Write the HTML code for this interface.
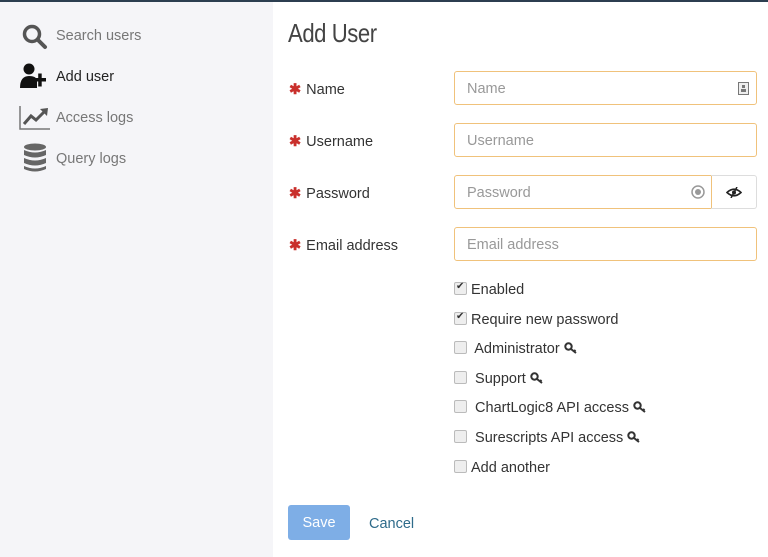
<!DOCTYPE html>
<html><head><style>
body{margin:0;width:768px;height:557px;overflow:hidden;font-family:"Liberation Sans",sans-serif;background:#fff;position:relative}
.top{position:absolute;left:0;top:0;width:768px;height:2px;background:#2c3e50}
.side{position:absolute;left:0;top:2px;width:273px;height:555px;background:#f5f5f8}
.nav{position:absolute;left:56px;font-size:14.5px;color:#777}
.ic{position:absolute}
.t{position:absolute;left:288px;top:18px;font-size:26px;color:#444;letter-spacing:-0.5px;transform:scaleX(0.85);transform-origin:left}
.lab{position:absolute;left:289px;font-size:14.5px;color:#333}
.lab b{color:#c9302c;font-weight:bold;margin-right:5px}
.in{position:absolute;left:454px;width:303px;height:33px;border:1px solid #f0c27b;border-radius:3px;box-sizing:border-box;font-size:14.5px;color:#999;padding:9px 0 0 12px}
.cb{position:absolute;left:454px;font-size:14.5px;color:#333}
.cb i{display:inline-block;width:11px;height:11px;border:1px solid #bbb;border-radius:2px;background:#eee;vertical-align:-1px;margin-right:4px;position:relative}
.cb i.c::after{content:"✔";position:absolute;left:1px;top:-2px;font-size:10px;color:#333;font-style:normal}
.k{display:inline-block;margin-left:4px;vertical-align:-1px}
</style></head><body>
<div class="top"></div>
<div class="side"></div>
<svg class="ic" style="left:21px;top:23px" width="27" height="27" viewBox="0 0 27 27"><circle cx="11" cy="11" r="7.5" fill="none" stroke="#555" stroke-width="3.5"/><line x1="16.5" y1="16.5" x2="24" y2="24" stroke="#555" stroke-width="4" stroke-linecap="round"/></svg>
<div class="nav" style="top:28px">Search users</div>
<svg class="ic" style="left:19px;top:63px" width="32" height="26" viewBox="0 0 32 26"><circle cx="10" cy="6" r="5.5" fill="#111"/><path d="M1 25 Q1 13 10 13 Q17 13 18 17 L18 25 Z" fill="#111"/><rect x="15" y="15" width="12" height="3.5" fill="#111"/><rect x="19.2" y="10.5" width="3.5" height="13" fill="#111"/></svg>
<div class="nav" style="top:69px;color:#222">Add user</div>
<svg class="ic" style="left:19px;top:104px" width="32" height="26" viewBox="0 0 32 26"><path d="M1 2 V25 H31" fill="none" stroke="#777" stroke-width="1.5"/><path d="M5 20 L12 12 L17 16 L25 8" fill="none" stroke="#555" stroke-width="3"/><path d="M21 5 L29 4 L28 12 Z" fill="#555"/></svg>
<div class="nav" style="top:110px">Access logs</div>
<svg class="ic" style="left:23px;top:143px" width="24" height="30" viewBox="0 0 24 30"><ellipse cx="12" cy="4" rx="11" ry="3.5" fill="#666"/><path d="M1 7 Q12 12 23 7 V12 Q12 17 1 12Z" fill="#666"/><path d="M1 15 Q12 20 23 15 V20 Q12 25 1 20Z" fill="#666"/><path d="M1 23 Q12 28 23 23 V26 Q12 31 1 26Z" fill="#666"/></svg>
<div class="nav" style="top:151px">Query logs</div>

<div class="t">Add User</div>
<div class="lab" style="top:82px"><b>✱</b>Name</div>
<div class="lab" style="top:134px"><b>✱</b>Username</div>
<div class="lab" style="top:186px"><b>✱</b>Password</div>
<div class="lab" style="top:238px"><b>✱</b>Email address</div>
<div class="in" style="top:71px;height:34px">Name<svg style="position:absolute;right:7px;top:10px" width="11" height="13"><rect x="0.5" y="0.5" width="10" height="12" fill="#eee" stroke="#777"/><rect x="4" y="3" width="3" height="3" fill="#777"/><rect x="3" y="7" width="5" height="3" fill="#777"/></svg></div>
<div class="in" style="top:123px;height:34px">Username</div>
<div class="in" style="top:175px;height:34px;width:258px;border-radius:3px 0 0 3px">Password<svg style="position:absolute;right:6px;top:9px" width="14" height="15"><circle cx="7" cy="7" r="6" fill="none" stroke="#999" stroke-width="1.5"/><circle cx="7" cy="7" r="3" fill="#999"/></svg></div>
<div style="position:absolute;left:711px;top:175px;width:46px;height:34px;border:1px solid #ddd;border-left:none;box-sizing:border-box;border-radius:0 3px 3px 0"><svg style="position:absolute;left:15px;top:11px" width="16" height="11" viewBox="0 0 16 11"><path d="M1 5.5 Q8 -1 15 5.5 Q8 12 1 5.5Z" fill="none" stroke="#222" stroke-width="1.6"/><circle cx="8" cy="5.5" r="2" fill="#222"/><line x1="11" y1="0" x2="5" y2="11" stroke="#222" stroke-width="1.5"/></svg></div>
<div class="in" style="top:227px;height:34px">Email address</div>

<div class="cb" style="top:282px"><i class="c"></i>Enabled</div>
<div class="cb" style="top:312px"><i class="c"></i>Require new password</div>
<div class="cb" style="top:341px"><i></i> Administrator<svg class="k" width="14" height="12" viewBox="0 0 14 12"><circle cx="4.5" cy="4.5" r="3.2" fill="none" stroke="#333" stroke-width="2"/><path d="M7 7 L12 11 M10 9.5 L11.5 8" stroke="#333" stroke-width="2"/></svg></div>
<div class="cb" style="top:371px"><i></i> Support<svg class="k" width="14" height="12" viewBox="0 0 14 12"><circle cx="4.5" cy="4.5" r="3.2" fill="none" stroke="#333" stroke-width="2"/><path d="M7 7 L12 11 M10 9.5 L11.5 8" stroke="#333" stroke-width="2"/></svg></div>
<div class="cb" style="top:400px"><i></i> ChartLogic8 API access<svg class="k" width="14" height="12" viewBox="0 0 14 12"><circle cx="4.5" cy="4.5" r="3.2" fill="none" stroke="#333" stroke-width="2"/><path d="M7 7 L12 11 M10 9.5 L11.5 8" stroke="#333" stroke-width="2"/></svg></div>
<div class="cb" style="top:430px"><i></i> Surescripts API access<svg class="k" width="14" height="12" viewBox="0 0 14 12"><circle cx="4.5" cy="4.5" r="3.2" fill="none" stroke="#333" stroke-width="2"/><path d="M7 7 L12 11 M10 9.5 L11.5 8" stroke="#333" stroke-width="2"/></svg></div>
<div class="cb" style="top:460px"><i></i>Add another</div>

<div style="position:absolute;left:288px;top:505px;width:62px;height:35px;background:#7eaee6;border-radius:3px;color:#fff;font-size:14.5px;text-align:center;line-height:37px">Save</div>
<div style="position:absolute;left:369px;top:516px;font-size:14.5px;color:#2e6b8a">Cancel</div>
</body></html>
